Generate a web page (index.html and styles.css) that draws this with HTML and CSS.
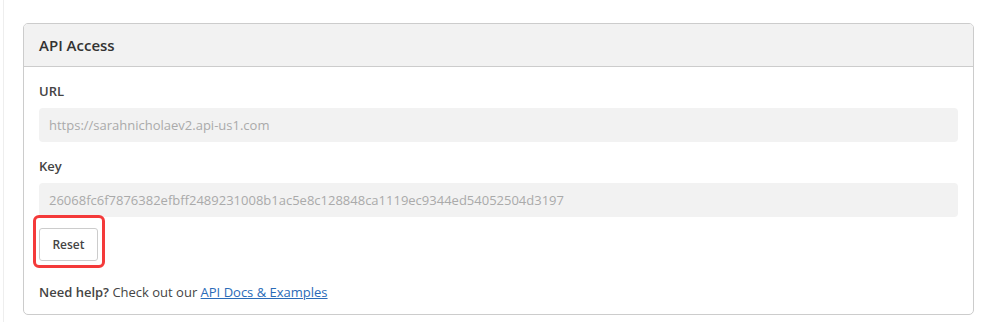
FILE: index.html
```html
<!DOCTYPE html>
<html>
<head>
<meta charset="utf-8">
<link rel="stylesheet" href="styles.css">
</head>
<body>
<div class="page">
  <div class="card">
    <div class="card-header">API Access</div>
    <div class="card-body">
      <label class="field-label">URL</label>
      <div class="field-input">https://sarahnicholaev2.api-us1.com</div>
      <label class="field-label">Key</label>
      <div class="field-input">26068fc6f7876382efbff2489231008b1ac5e8c128848ca1119ec9344ed54052504d3197</div>
      <div class="btn-wrap">
        <button class="btn">Reset</button>
        <span class="highlight"></span>
      </div>
      <p class="help"><strong>Need help?</strong> Check out our <a href="#">API Docs &amp; Examples</a></p>
    </div>
  </div>
</div>
</body>
</html>
```
FILE: styles.css
```css
html, body {
  margin: 0;
  padding: 0;
  background: #fff;
}
body {
  font-family: "Open Sans", "Liberation Sans", sans-serif;
  color: #444;
  width: 982px;
  height: 322px;
  overflow: hidden;
}
.page {
  margin-left: 3px;
  border-left: 1px solid #eee;
  height: 322px;
  padding: 23px 8px 0 19px;
  box-sizing: border-box;
}
.card {
  border: 1px solid #ccc;
  border-radius: 5px;
  background: #fff;
  overflow: hidden;
}
.card-header {
  background: #f2f2f2;
  border-bottom: 1px solid #ccc;
  padding: 10px 15px;
  font-size: 15px;
  line-height: 22px;
  font-weight: 600;
  color: #333;
}
.card-body {
  padding: 15px 15px 13px;
}
.field-label {
  display: block;
  font-size: 13px;
  line-height: 18px;
  font-weight: 600;
  color: #444;
  margin-bottom: 8px;
}
.field-input {
  height: 34px;
  line-height: 34px;
  background: #f2f2f2;
  border-radius: 4px;
  padding: 0 10px;
  font-size: 13px;
  color: #aaa;
  margin-bottom: 15px;
  white-space: nowrap;
}
.btn-wrap {
  position: relative;
  display: inline-block;
  margin-top: -5px;
}
.btn {
  display: block;
  width: 59px;
  height: 33px;
  border: 1px solid #ccc;
  border-radius: 3px;
  background: #fff;
  font-family: "Open Sans", "Liberation Sans", sans-serif;
  font-size: 12px;
  font-weight: 600;
  color: #444;
  padding: 0;
}
.highlight {
  position: absolute;
  left: -6px;
  top: -13px;
  width: 66px;
  height: 47px;
  border: 3px solid #f43a3a;
  border-radius: 6px;
  pointer-events: none;
}
.help {
  margin: 22px 0 0;
  font-size: 13px;
  line-height: 18px;
  color: #444;
}
.help strong {
  font-weight: 600;
}
.help a {
  color: #2a6bb8;
  text-decoration: underline;
}
```
